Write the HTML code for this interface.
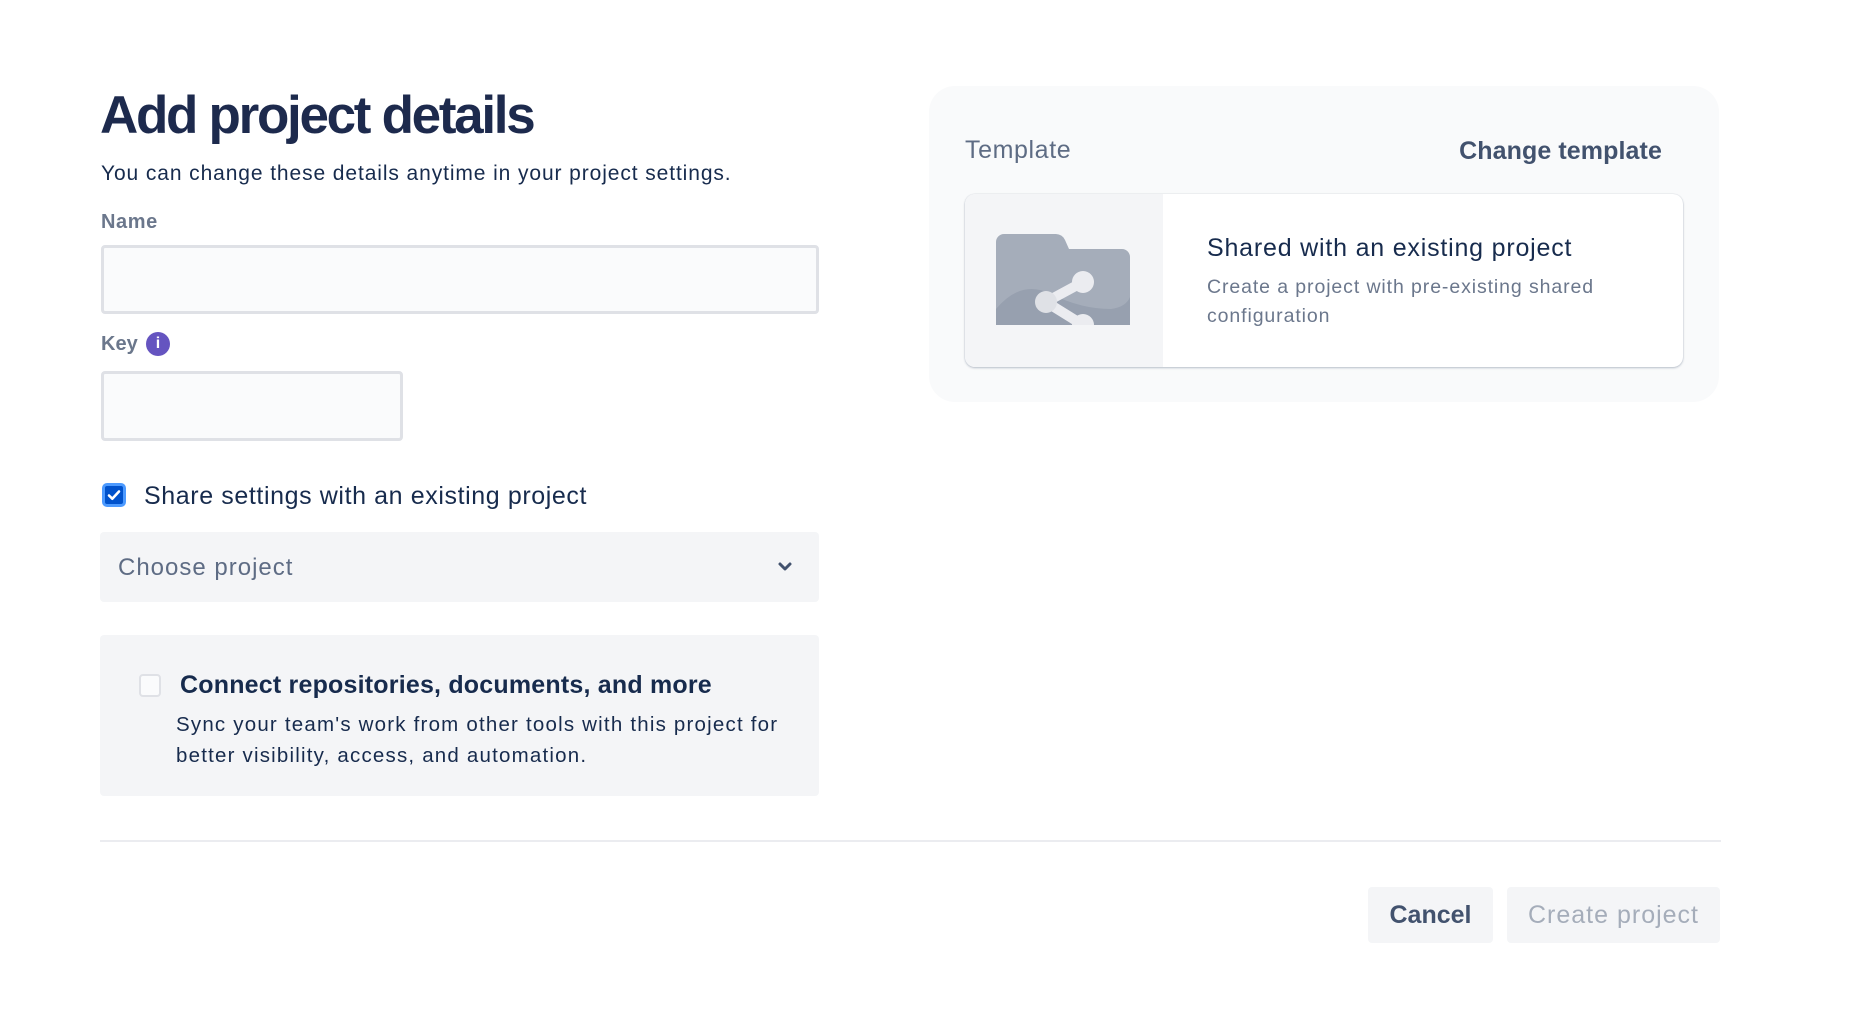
<!DOCTYPE html>
<html><head><meta charset="utf-8"><style>
*{box-sizing:border-box;margin:0;padding:0}
body{width:1866px;height:1022px;background:#fff;font-family:"Liberation Sans",Arial,sans-serif;position:relative;overflow:hidden;color:#172b4d}
.a{position:absolute;white-space:nowrap}
</style></head><body>
<div class="a" style="left:100px;top:84px;font-size:53px;font-weight:bold;letter-spacing:-2.3px;color:#1d2a4d;line-height:64px">Add project details</div>
<div class="a" style="left:101px;top:161px;font-size:21px;line-height:26px;color:#172b4d;letter-spacing:0.9px">You can change these details anytime in your project settings.</div>
<div class="a" style="left:101px;top:210px;font-size:20px;font-weight:bold;color:#6b778c;line-height:24px;letter-spacing:0.6px">Name</div>
<div class="a" style="left:101px;top:245px;width:718px;height:69px;background:#fafbfc;border:3px solid #dfe1e6;border-radius:4px"></div>
<div class="a" style="left:101px;top:332px;font-size:20px;font-weight:bold;color:#6b778c;line-height:24px">Key</div>
<div class="a" style="left:146px;top:332px;width:24px;height:24px;border-radius:50%;background:#6554c0;color:#fff;font-size:16px;font-weight:bold;text-align:center;line-height:24px">i</div>
<div class="a" style="left:101px;top:371px;width:302px;height:70px;background:#fafbfc;border:3px solid #dfe1e6;border-radius:4px"></div>
<div class="a" style="left:102px;top:483px;width:24px;height:24px;border-radius:5px;background:#0052cc;border:3px solid #4c9aff">
<svg width="18" height="18" viewBox="0 0 18 18" style="position:absolute;left:0;top:0"><path d="M4 9.5l3.3 3.2L14 5.5" stroke="#fff" stroke-width="2.6" fill="none" stroke-linecap="round" stroke-linejoin="round"/></svg></div>
<div class="a" style="left:144px;top:481px;font-size:25px;line-height:30px;color:#172b4d;letter-spacing:0.6px">Share settings with an existing project</div>
<div class="a" style="left:100px;top:532px;width:719px;height:70px;background:#f4f5f7;border-radius:4px"></div>
<div class="a" style="left:118px;top:553px;font-size:24px;line-height:29px;color:#5e6c84;letter-spacing:1px">Choose project</div>
<svg class="a" style="left:776px;top:560px" width="18" height="14" viewBox="0 0 18 14"><path d="M4 4l5 5 5-5" stroke="#42526e" stroke-width="3" fill="none" stroke-linecap="round" stroke-linejoin="round"/></svg>
<div class="a" style="left:100px;top:635px;width:719px;height:161px;background:#f4f5f7;border-radius:4px"></div>
<div class="a" style="left:139px;top:674px;width:22px;height:23px;background:#fafbfc;border:2px solid #dfe1e6;border-radius:4px"></div>
<div class="a" style="left:180px;top:670px;font-size:25px;font-weight:bold;line-height:30px;color:#172b4d;letter-spacing:0.2px">Connect repositories, documents, and more</div>
<div class="a" style="left:176px;top:709px;font-size:20.5px;line-height:31px;color:#172b4d;letter-spacing:1.2px">Sync your team's work from other tools with this project for<br>better visibility, access, and automation.</div>
<div class="a" style="left:100px;top:840px;width:1621px;height:2px;background:#ebecf0"></div>
<div class="a" style="left:1368px;top:887px;width:125px;height:56px;background:#f4f5f7;border-radius:4px;text-align:center;line-height:56px;font-size:25px;font-weight:bold;color:#42526e">Cancel</div>
<div class="a" style="left:1507px;top:887px;width:213px;height:56px;background:#f4f5f7;border-radius:4px;text-align:center;line-height:56px;font-size:25px;color:#a5adba;letter-spacing:1px">Create project</div>
<div class="a" style="left:929px;top:86px;width:790px;height:316px;background:#f9fafb;border-radius:26px"></div>
<div class="a" style="left:965px;top:135px;font-size:25px;line-height:30px;color:#5e6c84;letter-spacing:0.6px">Template</div>
<div class="a" style="left:1452px;top:136px;width:210px;text-align:right;font-size:25px;font-weight:bold;line-height:30px;color:#42526e;letter-spacing:0.1px">Change template</div>
<div class="a" style="left:965px;top:194px;width:718px;height:173px;background:#fff;border-radius:10px;box-shadow:0 1px 2px rgba(9,30,66,0.25),0 0 1px rgba(9,30,66,0.2);overflow:hidden">
<div style="position:absolute;left:0;top:0;width:198px;height:173px;background:#f4f5f7"></div>
<svg style="position:absolute;left:31px;top:40px" width="134" height="91" viewBox="0 0 134 91">
<defs><clipPath id="c"><path d="M0 8a8 8 0 0 1 8-8h52a10 10 0 0 1 9 6l4 9h53a8 8 0 0 1 8 8v68H0z"/></clipPath></defs>
<g clip-path="url(#c)">
<rect width="134" height="91" fill="#a5adba"/>
<path d="M0 75q25-30 55-15t60 15q15-2 19-12v30H0z" fill="#97a0af"/>
<path d="M50 68L87 48M50 68L87 91" stroke="#ebecf0" stroke-width="10"/>
<circle cx="87" cy="48" r="11" fill="#ebecf0"/>
<circle cx="50" cy="68" r="11" fill="#dfe1e6"/>
<circle cx="87" cy="91" r="11" fill="#ebecf0"/>
</g></svg>
<div style="position:absolute;left:242px;top:39px;font-size:25px;line-height:30px;color:#172b4d;white-space:nowrap;letter-spacing:0.8px">Shared with an existing project</div>
<div style="position:absolute;left:242px;top:79px;font-size:19.5px;line-height:29px;color:#6b778c;white-space:nowrap;letter-spacing:0.9px">Create a project with pre-existing shared<br>configuration</div>
</div>
</body></html>
